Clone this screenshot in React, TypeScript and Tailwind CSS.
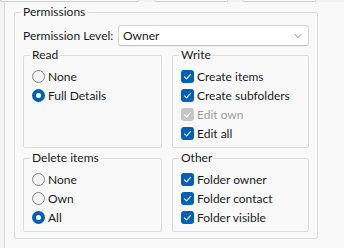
import { ChevronDown } from 'lucide-react';

const FONT = "font-['Lato','Noto_Sans',sans-serif]";

function Radio({ label, checked = false }: { label: string; checked?: boolean }) {
  return (
    <div className="flex h-[19px] items-center">
      {checked ? (
        <span className="flex h-[13px] w-[13px] items-center justify-center rounded-full bg-[#005fb8]">
          <span className="h-[5px] w-[5px] rounded-full bg-white" />
        </span>
      ) : (
        <span className="h-[13px] w-[13px] rounded-full border border-[#858585] bg-[#f5f5f5]" />
      )}
      <span className="ml-[3px] text-[#1b1b1b]">{label}</span>
    </div>
  );
}

function Check({ label, disabled = false }: { label: string; disabled?: boolean }) {
  return (
    <div className="flex h-[19px] items-center">
      <span
        className={`flex h-[13px] w-[13px] items-center justify-center rounded-[3px] ${
          disabled ? 'bg-[#c6c6c6]' : 'bg-[#005fb8]'
        }`}
      >
        <svg width="9" height="9" viewBox="0 0 9 9" fill="none">
          <path d="M1.5 4.8 L3.6 6.8 L7.6 2.4" stroke="white" strokeWidth="1.1" strokeLinecap="round" strokeLinejoin="round" />
        </svg>
      </span>
      <span className={`ml-[3px] ${disabled ? 'text-[#a0a0a0]' : 'text-[#1b1b1b]'}`}>{label}</span>
    </div>
  );
}

function Group({ title, children, className = '' }: { title: string; children: React.ReactNode; className?: string }) {
  return (
    <fieldset className={`m-0 min-w-0 rounded-[2px] border border-[#dcdcdc] pl-[8px] pr-[8px] ${className}`}>
      <legend className="-ml-[2px] px-[2px] leading-[16px] text-[#1b1b1b]">{title}</legend>
      {children}
    </fieldset>
  );
}

export default function App() {
  return (
    <div className={`flex h-[248px] w-[344px] flex-col overflow-hidden bg-[#f3f3f3] text-[12px] ${FONT}`}>
      {/* bottoms of the buttons above */}
      <div className="flex h-[2px] shrink-0">
        <div className="ml-0 w-[139px] rounded-b-[3px] border-x border-b border-[#cfcfcf] bg-[#fbfbfb]" />
        <div className="ml-[15px] w-[74px] rounded-b-[3px] border-x border-b border-[#cfcfcf] bg-[#fbfbfb]" />
        <div className="ml-[14px] w-[74px] rounded-b-[3px] border-x border-b border-[#cfcfcf] bg-[#fbfbfb]" />
      </div>

      <div className="flex flex-1">
        <div className="w-[4px] bg-[#f3f3f3]" />
        <div className="flex-1 border-l border-[#dcdcdc] bg-[#f9f9f9] pl-[9px] pt-[2px]">
          <Group title="Permissions" className="h-[235px] w-[304px] pb-[6px]">
            <div className="mt-[5px] flex items-center">
              <span className="w-[95px] text-[#1b1b1b]">Permission Level:</span>
              <div className="flex h-[21px] flex-1 items-center justify-between rounded-[3px] border border-[#d4d4d4] border-b-[#bcbcbc] bg-white pl-[4px] pr-[4px]">
                <span className="text-[#1b1b1b]">Owner</span>
                <ChevronDown size={12} strokeWidth={1.5} className="text-[#5f5f5f]" />
              </div>
            </div>

            <div className="mt-[1px] grid grid-cols-[139px_137px] gap-x-[10px] gap-y-[2px]">
              <Group title="Read" className="h-[101px] pt-[4px]">
                <Radio label="None" />
                <Radio label="Full Details" checked />
              </Group>
              <Group title="Write" className="h-[101px] pt-[4px]">
                <Check label="Create items" />
                <Check label="Create subfolders" />
                <Check label="Edit own" disabled />
                <Check label="Edit all" />
              </Group>
              <Group title="Delete items" className="h-[82px] pt-[4px]">
                <Radio label="None" />
                <Radio label="Own" />
                <Radio label="All" checked />
              </Group>
              <Group title="Other" className="h-[82px] pt-[4px]">
                <Check label="Folder owner" />
                <Check label="Folder contact" />
                <Check label="Folder visible" />
              </Group>
            </div>
          </Group>
        </div>
      </div>
    </div>
  );
}
